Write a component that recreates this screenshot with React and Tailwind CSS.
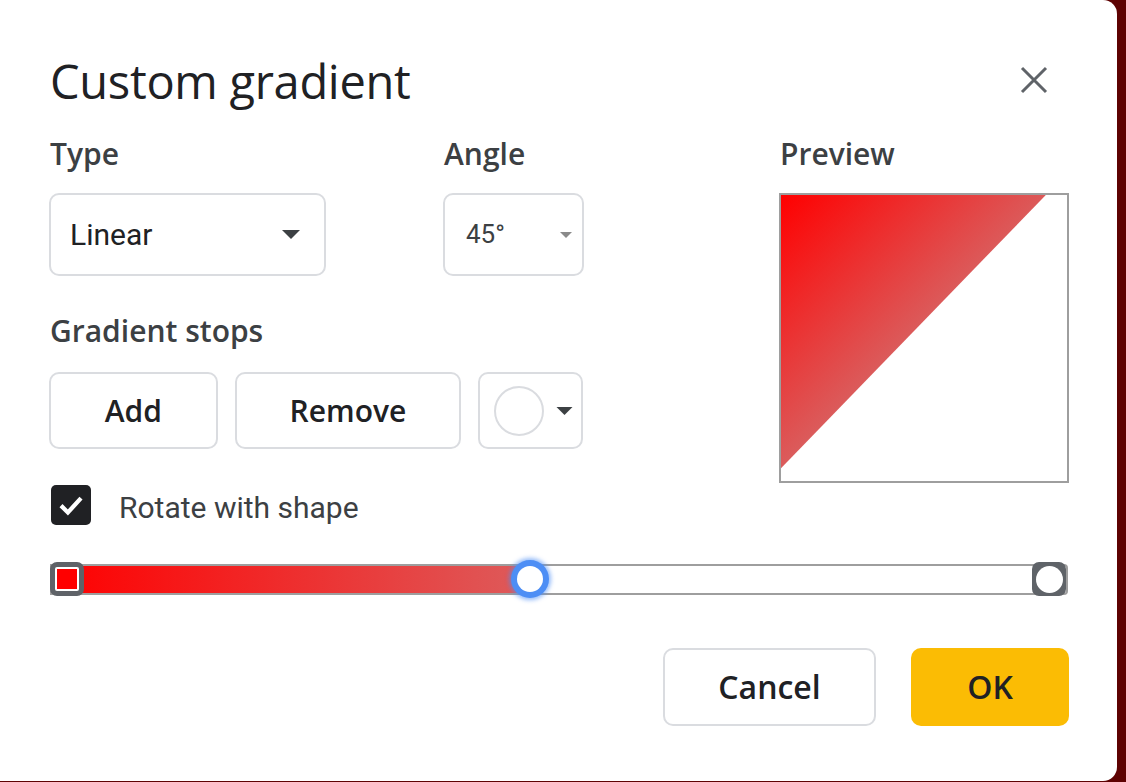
import { useState } from "react"

const gs = { fontFamily: '"Open Sans", "Noto Sans", sans-serif' }
const rb = { fontFamily: 'Roboto, "Liberation Sans", sans-serif' }

function Caret({ className }) {
  return (
    <svg viewBox="0 0 10 5" className={className}>
      <path d="M0 0 L10 0 L5 5 Z" fill="currentColor" />
    </svg>
  )
}

function Label({ children }) {
  return (
    <div className="text-[30px] leading-[36px] font-semibold text-[#3c4043]" style={gs}>
      {children}
    </div>
  )
}

export default function App() {
  const [rotate, setRotate] = useState(true)

  return (
    <div className="w-full h-[782px] bg-[#5e0202] overflow-hidden">
      <div className="w-[1117px] h-[781px] bg-white rounded-r-[14px] flex flex-col pl-[49px] pr-[49px]">
        {/* header */}
        <div className="flex items-center justify-between pt-[52px] h-[110px]">
          <h1 className="text-[47px] leading-[58px] text-[#202124] tracking-[-0.3px] ml-[1px]" style={gs}>
            Custom gradient
          </h1>
          <button className="w-[28px] h-[28px] mr-[20px] mt-[-2px] text-[#5f6368]">
            <svg viewBox="0 0 28 28" className="w-[28px] h-[28px]">
              <path d="M2 2 L26 26 M26 2 L2 26" stroke="currentColor" strokeWidth="3" />
            </svg>
          </button>
        </div>

        {/* body */}
        <div className="flex mt-[26px]">
          <div className="w-[534px] flex flex-col">
            <div className="flex gap-[117px]">
              <div className="flex flex-col gap-[21px]">
                <div className="pl-[1px]"><Label>Type</Label></div>
                <button className="w-[277px] h-[83px] border-2 border-[#dadce0] rounded-[10px] flex items-center justify-between pl-[19px] pr-[24px]">
                  <span className="text-[30px] text-[#202124]" style={rb}>Linear</span>
                  <Caret className="w-[18px] h-[9px] text-[#3c4043]" />
                </button>
              </div>
              <div className="flex flex-col gap-[21px]">
                <div className="pl-[1px]"><Label>Angle</Label></div>
                <button className="w-[141px] h-[83px] border-2 border-[#dadce0] rounded-[10px] flex items-center justify-between pl-[21px] pr-[10px]">
                  <span className="text-[26px] text-[#3c4043]" style={rb}>45°</span>
                  <Caret className="w-[12px] h-[6px] text-[#8a8a8a]" />
                </button>
              </div>
            </div>

            <div className="mt-[37px] flex flex-col gap-[23px]">
              <div className="pl-[1px]"><Label>Gradient stops</Label></div>
              <div className="flex gap-[17px]">
                <button className="w-[169px] h-[77px] border-2 border-[#dadce0] rounded-[10px] text-[30px] font-semibold text-[#202124]" style={gs}>
                  Add
                </button>
                <button className="w-[227px] h-[77px] border-2 border-[#dadce0] rounded-[10px] text-[30px] font-semibold text-[#202124]" style={gs}>
                  Remove
                </button>
                <button className="w-[105px] h-[77px] border-2 border-[#dadce0] rounded-[10px] flex items-center pl-[14px] gap-[12px]">
                  <span className="w-[50px] h-[50px] rounded-full border-2 border-[#dadce0] bg-white" />
                  <Caret className="w-[17px] h-[8px] text-[#3c4043]" />
                </button>
              </div>
            </div>

            <div className="mt-[31px] flex items-center gap-[28px] pl-[2px]">
              <button
                onClick={() => setRotate(!rotate)}
                className={`w-[40px] h-[40px] rounded-[5px] flex items-center justify-center ${rotate ? "bg-[#202124]" : "border-2 border-[#5f6368]"}`}
              >
                {rotate && (
                  <svg viewBox="0 0 24 24" className="w-[30px] h-[30px]">
                    <path d="M4 12.5 L9.5 18 L20 6.5" stroke="white" strokeWidth="3.4" fill="none" />
                  </svg>
                )}
              </button>
              <span className="text-[30px] text-[#3c4043] mt-[5px]" style={rb}>Rotate with shape</span>
            </div>
          </div>

          <div className="ml-[196px] flex flex-col gap-[21px]">
            <div className="pl-[1px]"><Label>Preview</Label></div>
            <div className="w-[290px] h-[290px] border-2 border-[#9e9e9e] bg-white">
              <div className="w-full h-full bg-[linear-gradient(135deg,#ff0000_0%,#d96060_50%,#d96060_100%)] [clip-path:polygon(0_0,92.6%_0,0_95.5%)]" />
            </div>
          </div>
        </div>

        {/* slider */}
        <div className="relative mt-[32px] ml-[1px] h-[34px] w-[1018px] flex items-center">
          <div className="w-full h-[31px] border-2 border-[#9e9e9e] rounded-r-[4px] bg-white flex">
            <div className="w-[480px] h-full bg-[linear-gradient(90deg,#ff0000,#dd5c5c)]" />
          </div>
          <div className="absolute left-0 top-0 w-[34px] h-[34px] rounded-[7px] border-[5px] border-[#5f6368] bg-white flex items-center justify-center">
            <div className="w-[20px] h-[20px] bg-[#ff0000]" />
          </div>
          <div className="absolute left-[461px] top-[-2px] w-[38px] h-[38px] rounded-full bg-[#4d8ef5] shadow-[0_0_4px_2px_rgba(77,142,245,0.6)] flex items-center justify-center">
            <div className="w-[26px] h-[26px] rounded-full bg-white" />
          </div>
          <div className="absolute right-[2px] top-0 w-[34px] h-[34px] rounded-[7px] bg-[#5f6368] flex items-center justify-center">
            <div className="w-[27px] h-[27px] rounded-full bg-white" />
          </div>
        </div>

        {/* footer */}
        <div className="flex justify-end gap-[35px] mt-[52px] mr-[-1px]">
          <button className="w-[213px] h-[78px] border-2 border-[#dadce0] rounded-[10px] text-[32px] font-semibold text-[#202124]" style={gs}>
            Cancel
          </button>
          <button className="w-[158px] h-[78px] bg-[#fbbc04] rounded-[10px] text-[32px] font-semibold text-[#202124]" style={gs}>
            OK
          </button>
        </div>
      </div>
    </div>
  )
}
